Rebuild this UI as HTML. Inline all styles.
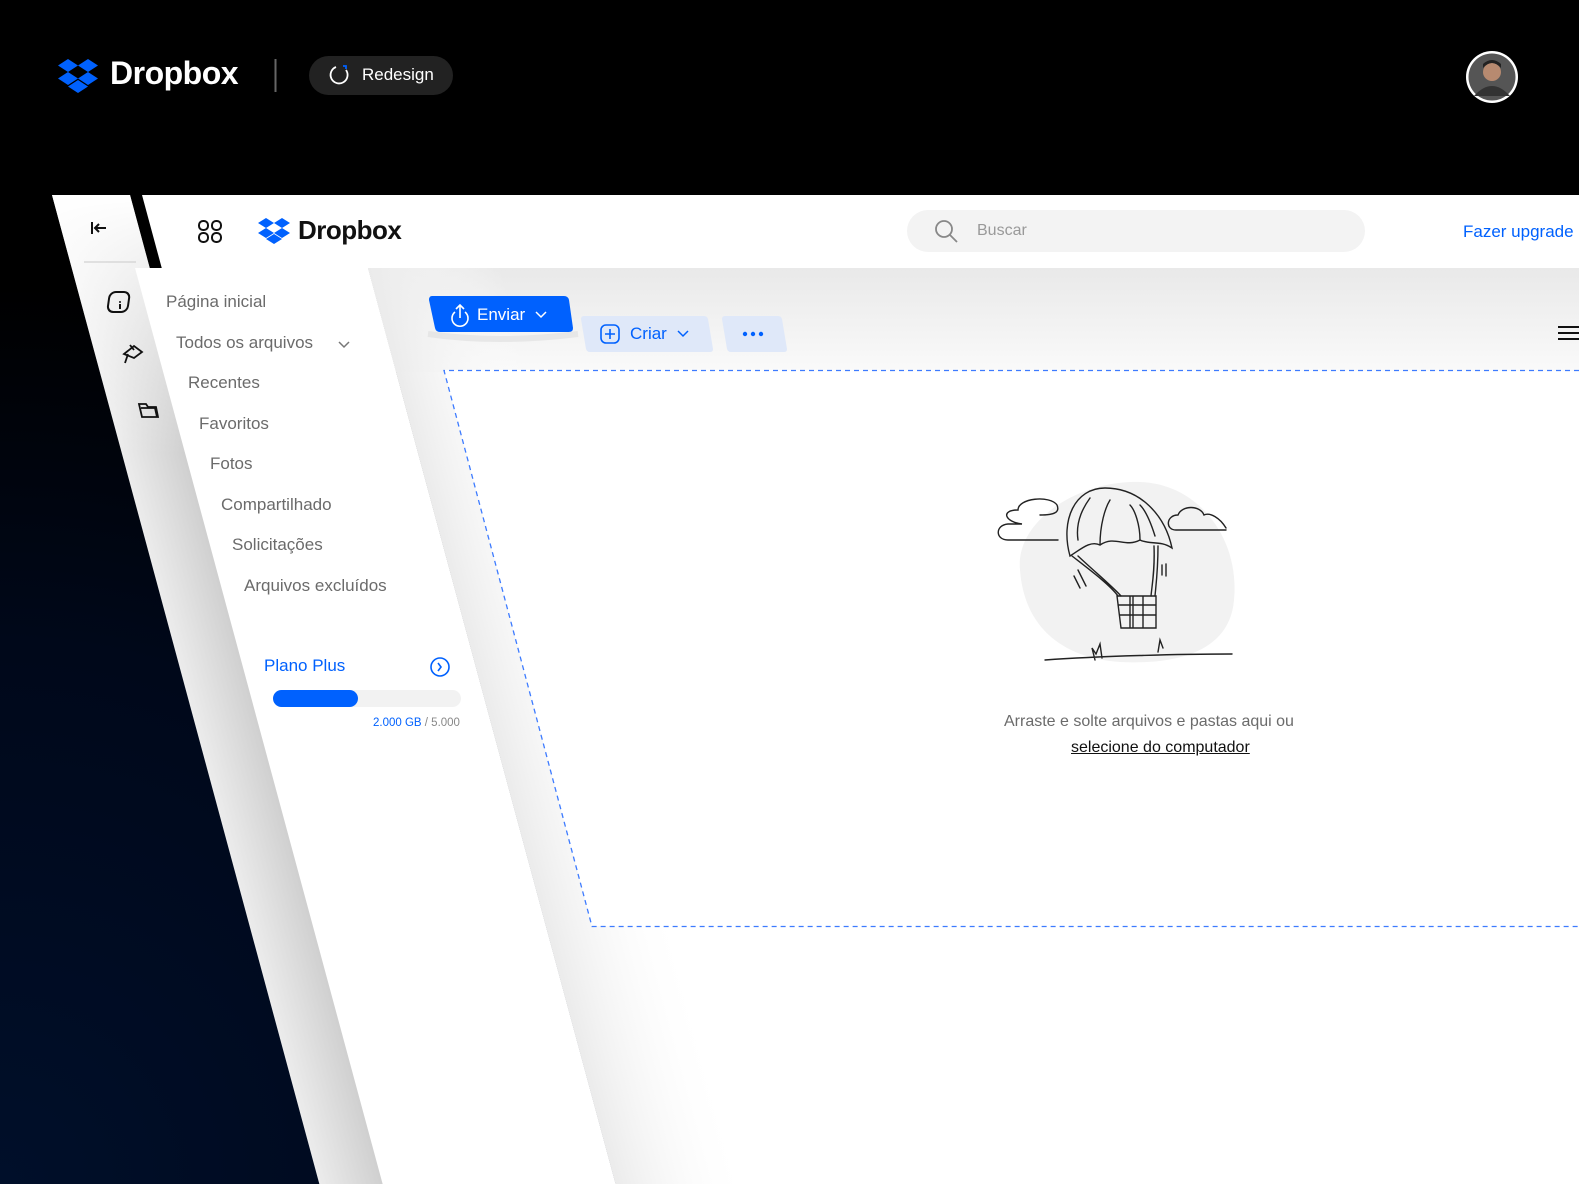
<!DOCTYPE html>
<html><head><meta charset="utf-8"><style>
*{margin:0;padding:0;box-sizing:border-box}
body{width:1579px;height:1184px;overflow:hidden;background:#000;font-family:"Liberation Sans",sans-serif;position:relative}
.a{position:absolute;white-space:nowrap}
.s{color:#6b6b6b;font-size:17px}
</style></head><body>
<svg class="a" style="left:0;top:0" width="1579" height="1184" viewBox="0 0 1579 1184">
<defs>
<radialGradient id="bg" cx="0" cy="1184" r="900" gradientUnits="userSpaceOnUse">
<stop offset="0" stop-color="#000f2a"/><stop offset="0.6" stop-color="#00081a"/><stop offset="1" stop-color="#000"/>
</radialGradient>
<linearGradient id="ib" x1="0" x2="1"><stop offset="0" stop-color="#ececec"/><stop offset="1" stop-color="#c9c9c9"/></linearGradient>
<linearGradient id="ibt" x1="0" y1="0" x2="0" y2="1"><stop offset="0" stop-color="#fff" stop-opacity="1"/><stop offset="1" stop-color="#fff" stop-opacity="0"/></linearGradient>
<linearGradient id="ms" x1="295" x2="430" gradientUnits="userSpaceOnUse"><stop offset="0" stop-color="#ebebeb"/><stop offset="1" stop-color="#fff" stop-opacity="0"/></linearGradient>
<linearGradient id="mt" x1="0" y1="268" x2="0" y2="372" gradientUnits="userSpaceOnUse"><stop offset="0" stop-color="#e9e9e9"/><stop offset="1" stop-color="#fafafa"/></linearGradient>
</defs>
<rect width="1579" height="1184" fill="url(#bg)"/>
<rect width="1579" height="190" fill="#000"/>
<g transform="matrix(1,0,0.2703,1,0,0)">
<rect x="-0.7" y="195" width="78" height="1000" fill="url(#ib)"/>
<rect x="-0.7" y="195" width="78" height="260" fill="url(#ibt)"/>
<rect x="89.3" y="195" width="2000" height="73" fill="#fff"/>
<rect x="295.6" y="268" width="2000" height="920" fill="#fff"/>
<rect x="295.6" y="268" width="2000" height="104" fill="url(#mt)"/>
<rect x="295.6" y="268" width="160" height="920" fill="url(#ms)"/>
<rect x="62.6" y="268" width="233" height="920" fill="#fff"/>
</g>
<line x1="84" y1="262" x2="136" y2="262" stroke="#d8d8d8" stroke-width="1.5"/>
<path d="M444,370 L592,926 H1579 V371 Z" fill="#fff"/>
<path d="M1579,370.5 H444 L592,926.5 H1579" fill="none" stroke="#3d7bff" stroke-width="1.3" stroke-dasharray="5 4"/>
<g fill="#0061fe">
<path d="M68,59 l10,6.5 -10,6.5 -10,-6.5z M88,59 l10,6.5 -10,6.5 -10,-6.5z M68,72 l10,6.5 -10,6.5 -10,-6.5z M88,72 l10,6.5 -10,6.5 -10,-6.5z M78,80 l10,6.5 -10,6.5 -10,-6.5z"/>
</g>
<line x1="275.5" y1="59" x2="275.5" y2="92" stroke="#666" stroke-width="2"/>
<rect x="309" y="56" width="144" height="39" rx="19.5" fill="#222"/>
<path d="M346,70 A8.5,8.5 0 1 1 336,67" fill="none" stroke="#fff" stroke-width="1.8"/>
<path d="M343,66 l3,0 0,3" fill="none" stroke="#0061fe" stroke-width="1.8"/>
<circle cx="1492" cy="77" r="26" fill="#fff"/>
<circle cx="1492" cy="77" r="23.5" fill="#555"/>
<circle cx="1492" cy="72" r="9" fill="#b78a70"/>
<path d="M1474,96 q18,-20 36,0 z" fill="#333"/>
<path d="M1483,68 q9,-10 18,0 v-4 q-9,-8 -18,0z" fill="#222"/>
<g fill="#0061fe">
<path d="M266,218 l8,5 -8,5 -8,-5z M282,218 l8,5 -8,5 -8,-5z M266,228 l8,5 -8,5 -8,-5z M282,228 l8,5 -8,5 -8,-5z M274,234 l8,5 -8,5 -8,-5z"/>
</g>
<g fill="none" stroke="#111" stroke-width="2">
<rect x="199" y="221" width="9" height="9" rx="4"/><rect x="212" y="221" width="9" height="9" rx="4"/>
<rect x="199" y="233" width="9" height="9" rx="4"/><rect x="212" y="233" width="9" height="9" rx="4"/>
<path d="M92,222 v12 M106,228 h-11 M99,224 l-4,4 4,4"/>
<rect x="109" y="292" width="20" height="20" rx="6" transform="skewX(-8) translate(42,0)"/>
<path d="M124,354 l10,-8 8,6 -8,6 z M128,354 l-3,9 M130,345 l4,5" stroke-width="1.8"/>
<path d="M139,404 h7 l2,3 h8 l2,10 h-16 z M141,408 h14 l2,9" stroke-width="1.8"/>
</g>
<circle cx="120" cy="302" r="1" fill="#111"/><path d="M120,300 v0 M120,304 v5" stroke="#111" stroke-width="2"/>
<rect x="907" y="210" width="458" height="42" rx="21" fill="#f3f3f3"/>
<circle cx="944" cy="229" r="8" fill="none" stroke="#888" stroke-width="1.8"/>
<path d="M950,235 l7,7" stroke="#888" stroke-width="1.8"/>
<path d="M339,342 l5,5 5,-5" fill="none" stroke="#777" stroke-width="1.5"/>
<path d="M432,296 H564 Q568,296 569,300 L573,328 Q573,332 569,332 H440 Q436,332 435,328 L429,300 Q429,296 432,296Z" fill="#0061fe"/>
<path d="M428,334 q70,10 150,0" stroke="#ddd" stroke-width="6" fill="none" opacity="0.6"/>
<path d="M584,316 H704 Q707,316 708,319 L713,349 Q713,352 710,352 H590 Q587,352 586,349 L581,319 Q581,316 584,316Z" fill="#dfe8f9"/>
<path d="M725,316 H778 Q781,316 782,319 L787,349 Q787,352 784,352 H731 Q728,352 727,349 L722,319 Q722,316 725,316Z" fill="#dfe8f9"/>
<circle cx="745" cy="334" r="2.2" fill="#0061fe"/><circle cx="753" cy="334" r="2.2" fill="#0061fe"/><circle cx="761" cy="334" r="2.2" fill="#0061fe"/>
<rect x="601" y="325" width="18" height="18" rx="5" fill="none" stroke="#0061fe" stroke-width="1.6"/>
<path d="M610,329 v10 M605,334 h10" stroke="#0061fe" stroke-width="1.6"/>
<path d="M678,331 l5,5 5,-5" fill="none" stroke="#0061fe" stroke-width="1.5"/>
<path d="M536,312 l5,5 5,-5" fill="none" stroke="#fff" stroke-width="1.5"/>
<path d="M455,312 a8,8 0 1 0 10,0 M460,318 v-12 M456,309 l4,-4 4,4" fill="none" stroke="#fff" stroke-width="1.6"/>
<path d="M1558,327 h21 M1558,333 h21 M1558,339 h21" stroke="#111" stroke-width="2"/>
<circle cx="440" cy="667" r="9" fill="none" stroke="#0061fe" stroke-width="1.6"/>
<path d="M438,663 l3,4 -3,4" fill="none" stroke="#0061fe" stroke-width="1.6"/>
<rect x="273" y="690" width="188" height="17" rx="8.5" fill="#f2f2f2"/>
<rect x="273" y="690" width="85" height="17" rx="8.5" fill="#0061fe"/>
<path d="M1020,570 C1015,520 1080,480 1140,482 C1200,484 1240,540 1234,600 C1230,650 1180,665 1120,662 C1060,658 1024,625 1020,570Z" fill="#f2f2f2"/>
<g fill="none" stroke="#222" stroke-width="1.4" stroke-linecap="round">
<path d="M1058,540 H1008 C995,540 995,525 1008,524 H1022 C1005,522 1000,510 1018,510 C1018,498 1050,495 1057,505 C1060,512 1055,515 1040,515"/>
<path d="M1226,530 H1176 C1165,530 1166,515 1178,515 C1182,505 1200,505 1204,515 C1210,512 1220,518 1226,528"/>
<path d="M1070,556 C1060,520 1075,488 1105,488 C1140,488 1165,515 1172,548 C1160,540 1150,545 1140,540 C1125,548 1115,535 1100,545 C1090,540 1080,550 1070,556Z"/>
<path d="M1078,540 C1075,520 1085,505 1090,498 M1100,545 C1100,525 1105,508 1110,500 M1140,540 C1140,525 1135,510 1130,505 M1155,536 C1150,520 1145,510 1140,505"/>
<path d="M1072,556 C1090,570 1110,585 1118,596 M1078,556 C1095,572 1112,586 1121,596 M1158,546 C1158,570 1156,585 1155,596 M1154,546 C1155,570 1152,585 1151,596"/>
<path d="M1078,570 l8,16 M1074,576 l6,12 M1162,565 v10 M1166,564 v12"/>
<path d="M1117,596 H1156 L1156,628 H1121Z M1118,605 H1156 M1120,615 H1156 M1130,596 V628 M1143,596 V628 M1133,596 V628"/>
<path d="M1045,660 C1100,656 1180,654 1232,654 M1095,660 l-3,-12 4,6 4,-10 2,14 M1158,652 l2,-12 3,8"/>
</g>
</svg>
<div class="a" style="left:110px;top:55px;color:#fff;font-size:32px;font-weight:bold;letter-spacing:-0.5px">Dropbox</div>
<div class="a" style="left:362px;top:65px;color:#fff;font-size:17px">Redesign</div>
<div class="a" style="left:298px;top:215px;color:#111;font-size:26px;font-weight:bold;letter-spacing:-0.5px">Dropbox</div>
<div class="a" style="left:977px;top:222px;color:#999;font-size:16px">Buscar</div>
<div class="a" style="left:1463px;top:222px;color:#0061fe;font-size:17px">Fazer upgrade</div>
<div class="a s" style="left:166px;top:292px">Página inicial</div>
<div class="a s" style="left:176px;top:333px">Todos os arquivos</div>
<div class="a s" style="left:188px;top:373px">Recentes</div>
<div class="a s" style="left:199px;top:414px">Favoritos</div>
<div class="a s" style="left:210px;top:454px">Fotos</div>
<div class="a s" style="left:221px;top:495px">Compartilhado</div>
<div class="a s" style="left:232px;top:535px">Solicitações</div>
<div class="a s" style="left:244px;top:576px">Arquivos excluídos</div>
<div class="a" style="left:264px;top:656px;color:#0061fe;font-size:17px">Plano Plus</div>
<div class="a" style="left:373px;top:717px;font-size:11.5px;color:#888"><span style="color:#0061fe">2.000 GB</span> / 5.000</div>
<div class="a" style="left:477px;top:305px;color:#fff;font-size:17px">Enviar</div>
<div class="a" style="left:630px;top:324px;color:#0061fe;font-size:17px">Criar</div>
<div class="a" style="left:1004px;top:713px;color:#6b6b6b;font-size:16px">Arraste e solte arquivos e pastas aqui ou</div>
<div class="a" style="left:1071px;top:739px;color:#111;font-size:16px;text-decoration:underline">selecione do computador</div>
</body></html>
